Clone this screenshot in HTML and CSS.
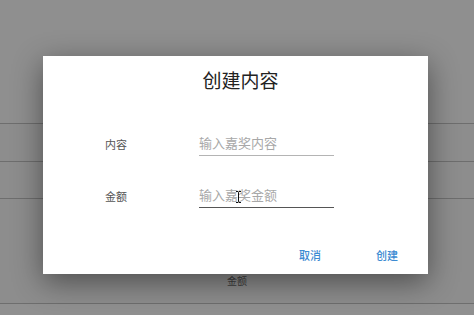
FILE: index.html
```html
<!DOCTYPE html>
<html lang="zh">
<head>
<meta charset="utf-8">
<link rel="stylesheet" href="styles.css">
</head>
<body>
<div class="page">
  <div class="bg-head"></div>
  <div class="bg-row r1"></div>
  <div class="bg-row r2"></div>
  <div class="bg-row r3"><span class="bg-label">金额</span></div>
  <div class="bg-rest"></div>
</div>
<div class="dialog">
  <h1 class="title">创建内容</h1>
  <div class="form">
    <div class="field">
      <span class="label">内容</span>
      <div class="input"><span class="ph">输入嘉奖内容</span></div>
    </div>
    <div class="field">
      <span class="label">金额</span>
      <div class="input focus"><span class="ph">输入嘉奖金额</span>
        <svg class="cursor" width="7" height="12" viewBox="0 0 7 12"><path d="M1 0.5h2l0.5 0.6L4 0.5h2M3.5 1.2v9.6M1 11.5h2l0.5-0.6L4 11.5h2" fill="none" stroke="#111" stroke-width="1"/></svg>
      </div>
    </div>
  </div>
  <div class="actions">
    <span class="btn">取消</span>
    <span class="btn">创建</span>
  </div>
</div>
</body>
</html>
```

FILE: styles.css
```css
html, body {
  margin: 0;
  padding: 0;
}
body {
  width: 474px;
  height: 315px;
  overflow: hidden;
  background: #8c8c8c;
  font-family: "Noto Sans CJK SC", "Noto Sans", sans-serif;
  position: relative;
}
.page {
  display: flex;
  flex-direction: column;
  height: 315px;
}
.bg-head {
  height: 123px;
  border-bottom: 1px solid #6e6e6e;
  background: #8f8f8f;
}
.bg-row {
  border-bottom: 1px solid #6e6e6e;
  background: #8d8d8d;
}
.r1 { height: 37px; }
.r2 { height: 36px; }
.r3 {
  height: 104px;
  display: flex;
  justify-content: center;
  align-items: flex-end;
}
.bg-label {
  font-size: 10px;
  color: #3e3e3e;
  line-height: 14px;
  margin-bottom: 15px;
}
.bg-rest {
  flex: 1;
  background: #909090;
}
.dialog {
  position: absolute;
  left: 43px;
  top: 56px;
  width: 385px;
  height: 218px;
  background: #fff;
  box-shadow: 0 8px 28px rgba(0, 0, 0, 0.45);
  box-sizing: border-box;
  padding-top: 13px;
  display: flex;
  flex-direction: column;
}
.title {
  margin: 0;
  font-size: 19px;
  line-height: 22px;
  font-weight: 400;
  color: #222;
  text-align: center;
  padding-left: 10px;
}
.form {
  display: flex;
  flex-direction: column;
  gap: 27px;
  margin-top: 40px;
  padding-left: 62px;
}
.field {
  display: flex;
  align-items: center;
}
.label {
  width: 94px;
  font-size: 11px;
  color: #555;
  font-weight: 400;
}
.input {
  position: relative;
  width: 135px;
  height: 24px;
  border-bottom: 1px solid #b4b4b4;
  font-size: 13px;
  line-height: 24px;
  color: #a8a8a8;
}
.input.focus {
  border-bottom-color: #555;
}
.cursor {
  position: absolute;
  left: 36px;
  top: 8px;
}
.actions {
  display: flex;
  justify-content: flex-end;
  gap: 55px;
  padding-right: 30px;
  margin-top: 37px;
}
.btn {
  font-size: 11px;
  line-height: 20px;
  color: #3d8bd2;
  font-weight: 500;
}
```
